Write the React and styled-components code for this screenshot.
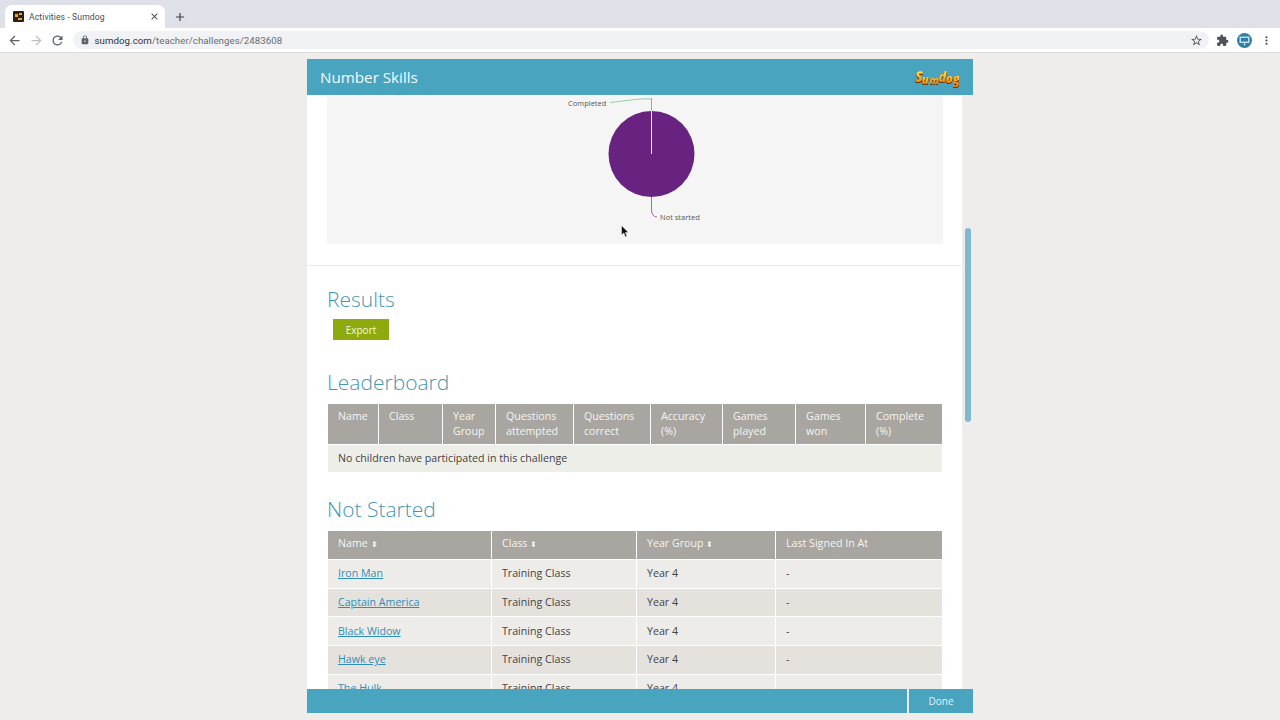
import React from 'react';
import styled, { createGlobalStyle } from 'styled-components';
import {
  MdAdd, MdArrowBack, MdArrowForward, MdClose, MdExtension, MdLock, MdMoreVert, MdRefresh, MdStarBorder,
} from 'react-icons/md';

const leaderboardCols = [51, 64, 53, 78, 77, 72, 73, 70, 77];
const leaderboardHead = [
  ['Name'], ['Class'], ['Year', 'Group'], ['Questions', 'attempted'], ['Questions', 'correct'],
  ['Accuracy', '(%)'], ['Games', 'played'], ['Games', 'won'], ['Complete', '(%)'],
];
const notStartedCols = [164, 145, 139, 167];
const children = ['Iron Man', 'Captain America', 'Black Widow', 'Hawk eye', 'The Hulk'];
const logoLetters = [
  { c: 'S', y: -1, s: 1.3 },
  { c: 'u', y: 2, s: 1 },
  { c: 'm', y: 2, s: 0.9 },
  { c: 'd', y: -1, s: 1.2 },
  { c: 'o', y: 1, s: 1.05 },
  { c: 'g', y: 1, s: 1.15 },
];

const Global = createGlobalStyle`
  html, body { margin: 0; height: 100%; overflow: hidden; }
  body { font-family: "Open Sans", "Liberation Sans", sans-serif; background: #eeedeb; }
`;

const Screen = styled.div`
  position: relative;
  width: 1280px;
  height: 720px;
  display: flex;
  flex-direction: column;
  overflow: hidden;
`;

const TabStrip = styled.div`
  height: 28px;
  background: #dee1e7;
  display: flex;
  align-items: flex-end;
  padding-left: 5px;
  gap: 6px;
  flex: none;
`;

const Tab = styled.div`
  width: 160px;
  height: 23px;
  box-sizing: border-box;
  background: #fff;
  border-radius: 7px 7px 0 0;
  display: flex;
  align-items: center;
  padding: 0 5px 0 8px;
  color: #4a4c50;
  font: 8.6px Roboto, "Liberation Sans", sans-serif;
  letter-spacing: 0.1px;
`;

const TabTitle = styled.span`
  flex: 1;
  margin-left: 5px;
`;

const Favicon = styled.svg`
  width: 11px;
  height: 11px;
`;

const StripButton = styled.div`
  height: 23px;
  display: flex;
  align-items: center;
  color: #3c4043;
  font-size: 14px;
  margin-left: 2px;
`;

const Toolbar = styled.div`
  height: 24px;
  background: #fff;
  border-bottom: 1px solid #dcdcdc;
  display: flex;
  align-items: center;
  flex: none;
  padding: 0 7px;
  box-sizing: content-box;
`;

const NavIcon = styled.span`
  width: 15px;
  height: 15px;
  margin-right: 6.5px;
  font-size: 15px;
  line-height: 0;
  color: ${p => (p.$dim ? '#bcbfc4' : '#5f6368')};
`;

const Omnibox = styled.div`
  margin-left: 1px;
  width: 1136px;
  height: 18px;
  box-sizing: border-box;
  border-radius: 9px;
  background: #f0f2f5;
  display: flex;
  align-items: center;
  padding: 0 6px 0 7px;
  font: 9.7px Roboto, "Liberation Sans", sans-serif;
  color: #6a6d72;
  letter-spacing: 0.05px;
`;

const Host = styled.span`
  color: #303236;
`;

const Url = styled.div`
  flex: 1;
  margin-left: 5px;
`;

const ToolIcons = styled.div`
  display: flex;
  align-items: center;
  margin-left: 7px;
  gap: 8px;
  color: #50535a;
  font-size: 13px;
  line-height: 0;
`;

const Avatar = styled.svg`
  width: 15px;
  height: 15px;
`;

const Page = styled.div`
  flex: 1;
  min-height: 0;
  display: flex;
  justify-content: center;
  padding: 6px 0 7px;
`;

const Modal = styled.div`
  width: 666px;
  display: flex;
  flex-direction: column;
`;

const Header = styled.div`
  height: 36px;
  flex: none;
  background: #49a4c0;
  display: flex;
  align-items: center;
  justify-content: space-between;
  padding: 0 14px 0 13px;
  color: #f2fafc;
  font-size: 15.2px;
`;

const Logo = styled.span`
  display: flex;
  align-items: center;
  font: italic 800 11.5px "Open Sans", sans-serif;
  letter-spacing: -0.2px;
  filter: drop-shadow(0 0 0.6px #5b2c05) drop-shadow(0 1px 0 #6b3405);
`;

const LogoLetter = styled.span`
  display: inline-block;
  transform: translateY(${p => p.$y}px) scale(${p => p.$s});
  background: linear-gradient(#ffdc45 30%, #f28c12 75%);
  -webkit-background-clip: text;
  background-clip: text;
  color: transparent;
`;

const Middle = styled.div`
  flex: 1;
  min-height: 0;
  display: flex;
`;

const Content = styled.div`
  width: 655px;
  background: #fff;
  overflow: hidden;
`;

const Track = styled.div`
  flex: 1;
  padding: 133px 2px 0 3px;
`;

const Thumb = styled.div`
  height: 194px;
  border-radius: 3px;
  background: #7fb9cf;
`;

const ChartPanel = styled.div`
  margin: 1px 19px 0 20px;
  height: 148px;
  background: #f5f5f5;
`;

const Chart = styled.svg`
  display: block;
`;

const Rule = styled.div`
  height: 1px;
  background: #ececec;
  margin-top: 21px;
`;

const Section = styled.div`
  padding: 0 20px;
`;

const Heading = styled.h2`
  margin: ${p => p.$top}px 0 0;
  font-size: 21px;
  font-weight: 300;
  line-height: 28px;
  color: #4496b2;
`;

const ExportButton = styled.button`
  display: block;
  margin: 6px 0 0 6px;
  width: 56px;
  height: 21px;
  padding: 0;
  border: 0;
  background: #8dab0f;
  color: #f4f8e2;
  font: 10px "Open Sans", sans-serif;
`;

const Table = styled.table`
  border-collapse: collapse;
  table-layout: fixed;
  width: 616px;
  margin-top: ${p => p.$top}px;
  font-size: 10.65px;
  line-height: 15px;
`;

const Col = styled.col`
  width: ${p => p.$w}px;
`;

const Th = styled.th`
  background: #a9a5a0;
  color: #f6f5f1;
  font-weight: 400;
  text-align: left;
  vertical-align: top;
  border: 1px solid #fff;
  padding: ${p => (p.$tall ? '5px 8px 5px 10px' : '5px 8px 8px 10px')};
`;

const Td = styled.td`
  background: ${p => (p.$alt ? '#e5e2de' : '#edece8')};
  color: #444;
  border: 1px solid #fff;
  padding: 6.35px 10px;
`;

const EmptyCell = styled(Td)`
  background: #eeeee9;
  padding: 6px 10px;
`;

const ChildLink = styled.a`
  color: #2f8fb6;
  text-decoration: underline;
`;

const Sort = styled.span`
  margin-left: 3px;
  font-size: 8px;
  vertical-align: 0;
`;

const Footer = styled.div`
  height: 24px;
  flex: none;
  display: flex;
  gap: 2px;
`;

const FooterBar = styled.div`
  flex: 1;
  background: #49a4c0;
`;

const DoneButton = styled.div`
  width: 64px;
  background: #49a4c0;
  color: #e4f3f7;
  font-size: 10px;
  display: flex;
  align-items: center;
  justify-content: center;
`;

const Cursor = styled.svg`
  position: absolute;
  left: 621px;
  top: 225px;
  width: 8px;
  height: 13px;
`;

function PieChart() {
  return (
    <Chart width="616" height="148" viewBox="0 0 616 148">
      <circle cx="324.5" cy="58" r="43" fill="#68227f" />
      <line x1="324.5" y1="15" x2="324.5" y2="58" stroke="#f3eef4" strokeWidth="1" />
      <path d="M324.5 15V2" stroke="#5fb05f" strokeWidth="0.8" fill="none" />
      <path d="M324.5 3C314 2 298 5 283 6.5" stroke="#66c27a" strokeWidth="0.7" fill="none" />
      <path d="M324.5 101V113Q324.5 121 330 121" stroke="#8a4a9c" strokeWidth="0.8" fill="none" />
      <text x="241" y="10" fontSize="7.5" fill="#555" fontFamily="Open Sans">Completed</text>
      <text x="333" y="124" fontSize="7.5" fill="#555" fontFamily="Open Sans">Not started</text>
    </Chart>
  );
}

function App() {
  return (
    <Screen>
      <Global />
      <TabStrip>
        <Tab>
          <Favicon viewBox="0 0 11 11">
            <rect width="11" height="11" rx="1" fill="#2b2118" />
            <path d="M2 3h3v3H2zM6 2h3v2H6zM5 7h4v2H5z" fill="#e8a62c" />
          </Favicon>
          <TabTitle>Activities - Sumdog</TabTitle>
          <MdClose size={11} />
        </Tab>
        <StripButton><MdAdd size={14} /></StripButton>
      </TabStrip>
      <Toolbar>
        <NavIcon><MdArrowBack /></NavIcon>
        <NavIcon $dim><MdArrowForward /></NavIcon>
        <NavIcon><MdRefresh /></NavIcon>
        <Omnibox>
          <MdLock size={10} color="#5f6368" />
          <Url><Host>sumdog.com</Host>/teacher/challenges/2483608</Url>
          <MdStarBorder size={13} color="#50535a" />
        </Omnibox>
        <ToolIcons>
          <MdExtension />
          <Avatar viewBox="0 0 15 15">
            <circle cx="7.5" cy="7.5" r="7.5" fill="#2f7fa3" />
            <rect x="2.5" y="3.5" width="10" height="6.5" fill="#bcdcea" />
            <rect x="4" y="5" width="7" height="3.5" fill="#2f7fa3" />
            <rect x="6.8" y="10" width="1.4" height="2.5" fill="#bcdcea" />
          </Avatar>
          <MdMoreVert />
        </ToolIcons>
      </Toolbar>
      <Page>
        <Modal>
          <Header>
            Number Skills
            <Logo>
              {logoLetters.map(l => (
                <LogoLetter key={l.c} $y={l.y} $s={l.s}>{l.c}</LogoLetter>
              ))}
            </Logo>
          </Header>
          <Middle>
            <Content>
              <ChartPanel><PieChart /></ChartPanel>
              <Rule />
              <Section>
                <Heading $top={19}>Results</Heading>
                <ExportButton>Export</ExportButton>
                <Heading $top={28}>Leaderboard</Heading>
                <Table $top={7}>
                  <colgroup>
                    {leaderboardCols.map((w, i) => <Col key={i} $w={w} />)}
                  </colgroup>
                  <thead>
                    <tr>
                      {leaderboardHead.map((lines, i) => (
                        <Th key={i} $tall>
                          {lines.map((l, j) => <div key={j}>{l}</div>)}
                        </Th>
                      ))}
                    </tr>
                  </thead>
                  <tbody>
                    <tr>
                      <EmptyCell colSpan={9}>No children have participated in this challenge</EmptyCell>
                    </tr>
                  </tbody>
                </Table>
                <Heading $top={22}>Not Started</Heading>
                <Table $top={7}>
                  <colgroup>
                    {notStartedCols.map((w, i) => <Col key={i} $w={w} />)}
                  </colgroup>
                  <thead>
                    <tr>
                      <Th>Name<Sort>⬍</Sort></Th>
                      <Th>Class<Sort>⬍</Sort></Th>
                      <Th>Year Group<Sort>⬍</Sort></Th>
                      <Th>Last Signed In At</Th>
                    </tr>
                  </thead>
                  <tbody>
                    {children.map((name, i) => (
                      <tr key={name}>
                        <Td $alt={i % 2 === 1}><ChildLink href="#">{name}</ChildLink></Td>
                        <Td $alt={i % 2 === 1}>Training Class</Td>
                        <Td $alt={i % 2 === 1}>Year 4</Td>
                        <Td $alt={i % 2 === 1}>-</Td>
                      </tr>
                    ))}
                  </tbody>
                </Table>
              </Section>
            </Content>
            <Track><Thumb /></Track>
          </Middle>
          <Footer>
            <FooterBar />
            <DoneButton>Done</DoneButton>
          </Footer>
        </Modal>
      </Page>
      <Cursor viewBox="0 0 8 13">
        <path d="M0.5 0.5V10L2.8 8L4.4 12L6 11.3L4.4 7.6H7.5Z" fill="#111" stroke="#fff" strokeWidth="0.5" />
      </Cursor>
    </Screen>
  );
}

export default App;
